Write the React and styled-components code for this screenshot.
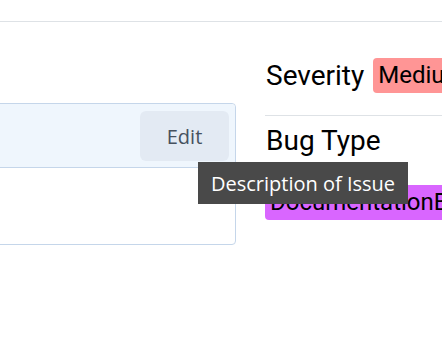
import React from "react";
import styled, { createGlobalStyle } from "styled-components";

const Global = createGlobalStyle`
  html, body { margin: 0; padding: 0; background: #fff; overflow: hidden; }
  body { width: 442px; height: 353px; font-family: "Open Sans", "Noto Sans", sans-serif; }
`;

const Page = styled.div`
  width: 442px;
  height: 353px;
  overflow: hidden;
`;

const TopRule = styled.div`
  height: 21px;
  border-bottom: 1px solid #dee2e6;
`;

const Row = styled.div`
  display: flex;
  align-items: flex-start;
  gap: 29px;
  margin-left: -60px;
`;

const LeftCol = styled.div`
  width: 296px;
  flex: none;
  padding-top: 81px;
`;

const Card = styled.div`
  position: relative;
  border: 1px solid #c5d6ea;
  border-radius: 4px;
  background: #fff;
`;

const CardHeader = styled.div`
  display: flex;
  justify-content: flex-end;
  padding: 7px 6px 6px;
  background: #eff6fd;
  border-bottom: 1px solid #c5d6ea;
  border-radius: 4px 4px 0 0;
`;

const EditButton = styled.button`
  width: 89px;
  height: 50px;
  border: none;
  border-radius: 6px;
  background: #e3eaf3;
  color: #46515e;
  font-family: "Open Sans", "Noto Sans", sans-serif;
  font-size: 20px;
  padding: 0;
`;

const CardBody = styled.div`
  height: 76px;
`;

const Tooltip = styled.div`
  position: absolute;
  left: 257px;
  top: 58px;
  width: 210px;
  height: 42px;
  box-sizing: border-box;
  background: #494949;
  color: #fff;
  font-family: "Open Sans", "Noto Sans", sans-serif;
  font-size: 20px;
  display: flex;
  align-items: center;
  justify-content: center;
  z-index: 2;
`;

const RightCol = styled.div`
  flex: 1;
  padding-top: 36px;
`;

const Heading = styled.div`
  display: flex;
  align-items: center;
  gap: 9px;
  font-family: Roboto, "Noto Sans", sans-serif;
  font-size: 28px;
  font-weight: 400;
  color: #000;
  white-space: nowrap;
  margin-left: 1px;
`;

const Badge = styled.span`
  display: inline-block;
  padding: 0 5px;
  height: 35px;
  line-height: 35px;
  border-radius: 4px;
  background: ${(p) => p.$bg};
  font-family: Roboto, "Noto Sans", sans-serif;
  font-size: 24px;
  font-weight: 400;
  color: #000;
  white-space: nowrap;
`;

const Divider = styled.hr`
  margin: 22px 0 0;
  border: none;
  border-top: 1px solid #dee2e6;
`;

const Section = styled.div`
  padding-top: 8px;
`;

const BadgeRow = styled.div`
  margin-top: 28px;
`;

export default function App() {
  return (
    <Page>
      <Global />
      <TopRule />
      <Row>
        <LeftCol>
          <Card>
            <CardHeader>
              <EditButton>Edit</EditButton>
            </CardHeader>
            <CardBody />
            <Tooltip>Description of Issue</Tooltip>
          </Card>
        </LeftCol>
        <RightCol>
          <Heading>
            Severity <Badge $bg="#ff9595">Medium</Badge>
          </Heading>
          <Divider />
          <Section>
            <Heading>Bug Type</Heading>
            <BadgeRow>
              <Badge $bg="#d966ff">DocumentationBug</Badge>
            </BadgeRow>
          </Section>
        </RightCol>
      </Row>
    </Page>
  );
}
